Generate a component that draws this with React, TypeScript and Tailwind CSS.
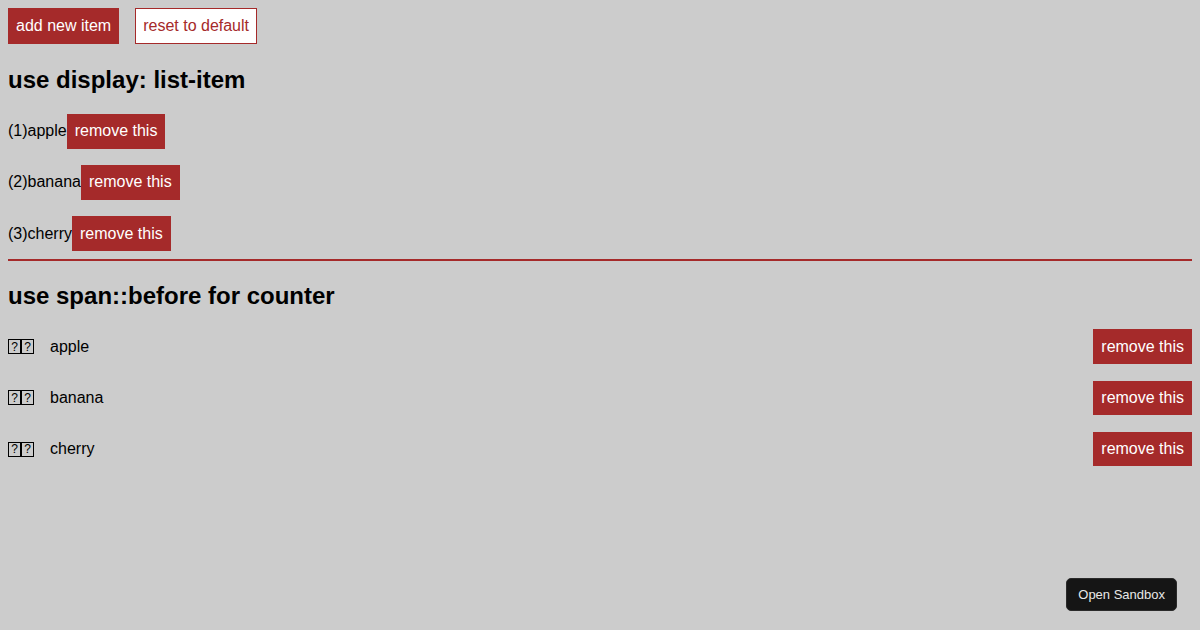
import React, { useState } from 'react';

const DEFAULT_ITEMS = ['apple', 'banana', 'cherry'];

const Tofu: React.FC = () => (
  <span className="inline-flex h-[15px] w-[13px] items-center justify-center border border-black text-[12px] leading-none">?</span>
);

export default function App() {
  const [items, setItems] = useState<string[]>(DEFAULT_ITEMS);

  const remove = (idx: number) => setItems(items.filter((_, i) => i !== idx));

  return (
    <div className="min-h-[630px] bg-[#cccccc] p-2 text-base text-black" style={{ fontFamily: '"Liberation Sans", Arial, sans-serif' }}>
      {/* top controls */}
      <div className="flex h-9 gap-4">
        <button
          onClick={() => setItems([...items, 'item ' + (items.length + 1)])}
          className="bg-[#a52a2a] px-2 text-white"
        >
          add new item
        </button>
        <button
          onClick={() => setItems(DEFAULT_ITEMS)}
          className="border border-[#a52a2a] bg-white px-[7px] text-[#a52a2a]"
        >
          reset to default
        </button>
      </div>

      {/* list-item section */}
      <h2 className="mt-[22px] text-2xl leading-[28px] font-bold">use display: list-item</h2>
      <ul className="mt-[20px] flex flex-col gap-[16.6px]">
        {items.map((item, i) => (
          <li key={item + i} className="flex items-center">
            <span>({i + 1}){item}</span>
            <button onClick={() => remove(i)} className="h-[34.6px] bg-[#a52a2a] px-2 text-white">
              remove this
            </button>
          </li>
        ))}
      </ul>

      <div className="mt-[8.5px] h-[2px] bg-[#a52a2a]" />

      {/* span::before section */}
      <h2 className="mt-[21px] text-2xl leading-[28px] font-bold">use span::before for counter</h2>
      <ul className="mt-[19px] flex flex-col gap-[16.6px]">
        {items.map((item, i) => (
          <li key={item + i} className="flex items-center">
            <span className="flex">
              <Tofu />
              <Tofu />
            </span>
            <span className="ml-[16px]">{item}</span>
            <button onClick={() => remove(i)} className="ml-auto h-[34.6px] bg-[#a52a2a] px-2 text-white">
              remove this
            </button>
          </li>
        ))}
      </ul>

      <button className="fixed right-[23px] bottom-[19px] h-[33px] rounded-[5px] border border-[#2a2a2a] bg-[#151515] px-[11px] text-[13px] text-[#e8e8e8]">
        Open Sandbox
      </button>
    </div>
  );
}
